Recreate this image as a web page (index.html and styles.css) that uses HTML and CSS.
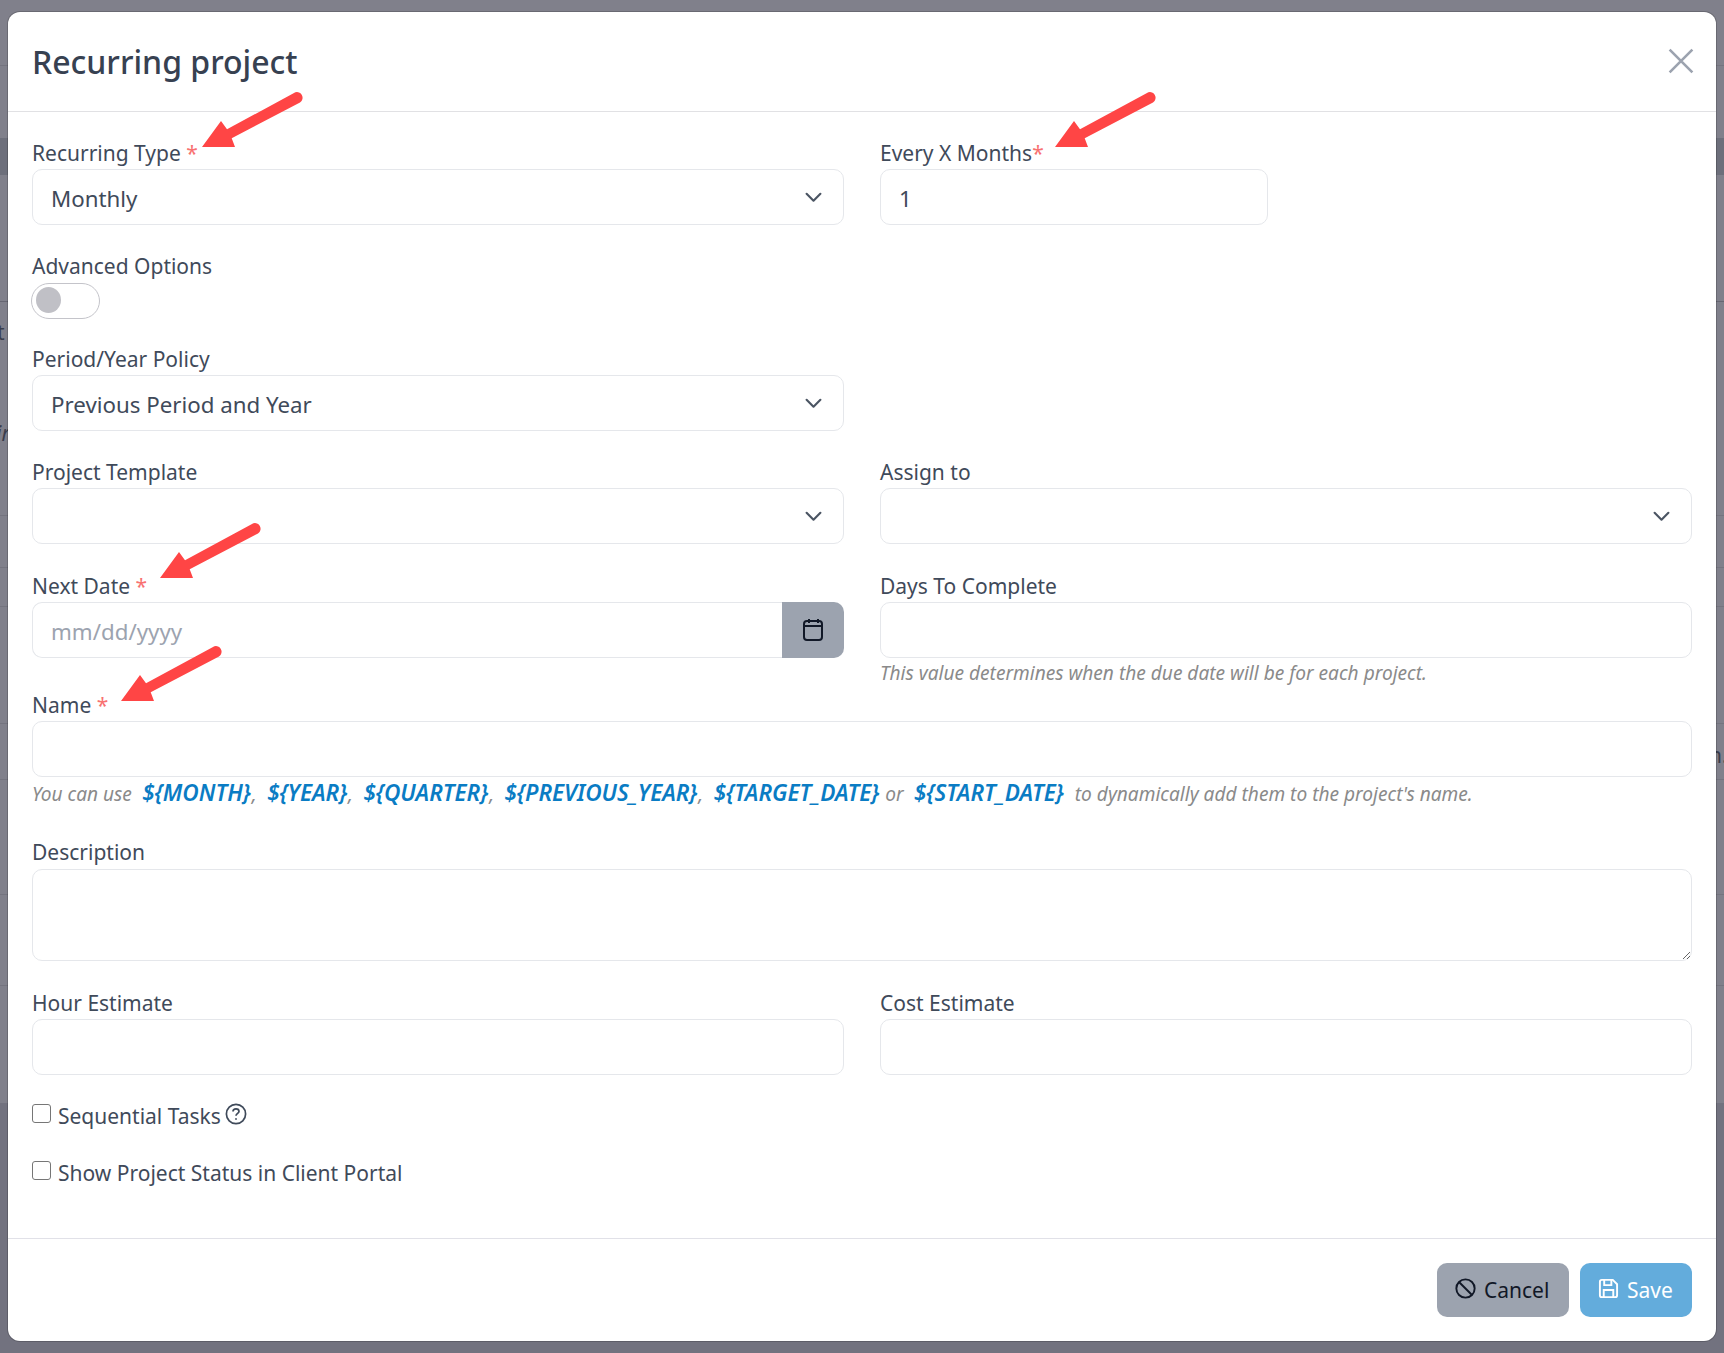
FILE: index.html
```html
<!DOCTYPE html>
<html lang="en">
<head>
  <meta charset="UTF-8">
  <title>Recurring project</title>
  <link rel="stylesheet" href="styles.css">
</head>
<body>
  <!-- Page dimmed behind the modal -->
  <div class="backdrop">
    <div class="bg-row bg-row-a"></div>
    <div class="bg-row bg-row-b"></div>
    <div class="bg-row bg-row-band"></div>
    <div class="bg-row bg-row-c"></div>
    <div class="bg-row bg-row-d"></div>
    <div class="bg-row bg-row-e"></div>
    <div class="bg-row bg-row-f"></div>
    <div class="bg-row bg-row-g"></div>
    <div class="bg-row bg-row-h"></div>
    <div class="bg-row bg-row-i"></div>
    <div class="bg-row bg-row-j"></div>
    <span class="bg-text bg-text-t">t</span>
    <span class="bg-text bg-text-ir">ir</span>
    <span class="bg-text bg-text-n">n.</span>
  </div>

  <svg class="defs" width="0" height="0">
    <symbol id="arrow" viewBox="0 0 104 58">
      <path d="M0 57 L19 31 L25 39.3 L92 3 A5.5 5.5 0 0 1 98 12.4 L29.7 48.3 L33 57 Z"/>
    </symbol>
    <symbol id="chevron" viewBox="0 0 16 16">
      <path d="M1.5 4.5 L8 11 L14.5 4.5" fill="none" stroke="currentColor" stroke-width="2" stroke-linecap="round" stroke-linejoin="round"/>
    </symbol>
  </svg>

  <div class="modal">
    <div class="modal-header">
      <h2 class="modal-title">Recurring project</h2>
      <svg class="close-icon" viewBox="0 0 24 24"><path d="M1.5 1.5 L22.5 22.5 M22.5 1.5 L1.5 22.5"/></svg>
    </div>

    <div class="modal-body">
      <div class="row">
        <div class="field">
          <label>Recurring Type <span class="req">*</span></label>
          <div class="select-wrap">
            <select class="control"><option>Monthly</option></select>
            <svg class="chevron"><use href="#chevron"/></svg>
          </div>
        </div>
        <div class="field">
          <label>Every X Months<span class="req">*</span></label>
          <input class="control control-short" type="text" value="1">
        </div>
      </div>

      <div class="row row-toggle">
        <div class="field">
          <label>Advanced Options</label>
          <div class="toggle"><span class="toggle-knob"></span></div>
        </div>
      </div>

      <div class="row">
        <div class="field">
          <label>Period/Year Policy</label>
          <div class="select-wrap">
            <select class="control"><option>Previous Period and Year</option></select>
            <svg class="chevron"><use href="#chevron"/></svg>
          </div>
        </div>
      </div>

      <div class="row row-template">
        <div class="field">
          <label>Project Template</label>
          <div class="select-wrap">
            <select class="control"><option></option></select>
            <svg class="chevron"><use href="#chevron"/></svg>
          </div>
        </div>
        <div class="field">
          <label>Assign to</label>
          <div class="select-wrap">
            <select class="control"><option></option></select>
            <svg class="chevron"><use href="#chevron"/></svg>
          </div>
        </div>
      </div>

      <div class="row row-tight">
        <div class="field">
          <label>Next Date <span class="req">*</span></label>
          <div class="date-group">
            <input class="control" type="text" placeholder="mm/dd/yyyy">
            <span class="date-btn">
              <svg viewBox="0 0 22 24" class="date-icon">
                <rect x="2" y="3" width="18" height="19" rx="3"/>
                <path d="M2 8 H20 M7 1 V5 M16 1 V5"/>
              </svg>
            </span>
          </div>
        </div>
        <div class="field">
          <label>Days To Complete</label>
          <input class="control" type="text">
          <div class="help">This value determines when the due date will be for each project.</div>
        </div>
      </div>

      <div class="row row-single row-tight">
        <div class="field">
          <label>Name <span class="req">*</span></label>
          <input class="control" type="text">
          <div class="help help-vars">You can use <b>${MONTH}</b>, <b>${YEAR}</b>, <b>${QUARTER}</b>, <b>${PREVIOUS_YEAR}</b>, <b>${TARGET_DATE}</b> or <b>${START_DATE}</b> to dynamically add them to the project's name.</div>
        </div>
      </div>

      <div class="row row-single row-desc">
        <div class="field">
          <label>Description</label>
          <textarea class="control control-area"></textarea>
        </div>
      </div>

      <div class="row">
        <div class="field">
          <label>Hour Estimate</label>
          <input class="control" type="text">
        </div>
        <div class="field">
          <label>Cost Estimate</label>
          <input class="control" type="text">
        </div>
      </div>

      <div class="check-row">
        <span class="check"></span>
        <span>Sequential Tasks</span>
        <svg class="help-icon" viewBox="0 0 22 22">
          <circle cx="11" cy="11" r="9.6"/>
          <path d="M8 8.6 C8 6.8 9.4 5.9 11 5.9 C12.7 5.9 14 6.9 14 8.4 C14 10.4 11 10.4 11 12.8"/>
          <circle class="help-dot" cx="11" cy="16" r=".9"/>
        </svg>
      </div>
      <div class="check-row">
        <span class="check"></span>
        <span>Show Project Status in Client Portal</span>
      </div>
    </div>

    <div class="modal-footer">
      <button class="btn btn-cancel">
        <svg viewBox="0 0 22 22" class="btn-icon"><circle cx="11" cy="11" r="9.6"/><path d="M4.2 4.2 L17.8 17.8"/></svg>
        Cancel
      </button>
      <button class="btn btn-save">
        <svg viewBox="0 0 22 22" class="btn-icon">
          <path d="M2 4 Q2 2 4 2 H15.5 L20 6.5 V18 Q20 20 18 20 H4 Q2 20 2 18 Z"/>
          <path d="M6.5 2 V7.5 H14 V2 M6 20 V12.5 H16 V20"/>
        </svg>
        Save
      </button>
    </div>

    <!-- Red annotation arrows drawn on top of the screenshot -->
    <svg class="arrow arrow-type"><use href="#arrow"/></svg>
    <svg class="arrow arrow-months"><use href="#arrow"/></svg>
    <svg class="arrow arrow-date"><use href="#arrow"/></svg>
    <svg class="arrow arrow-name"><use href="#arrow"/></svg>
  </div>
</body>
</html>
```

FILE: styles.css
```css
* {
  box-sizing: border-box;
}

html, body {
  margin: 0;
  height: 100%;
  overflow: hidden;
}

body {
  position: relative;
  width: 1724px;
  height: 1353px;
  padding: 12px 8px;
  font-family: "Noto Sans", "Open Sans", sans-serif;
  font-size: 21px;
  color: #3f4a5a;
  background-color: #72727f;
}

.defs {
  position: absolute;
}

/* Background page */
.backdrop {
  position: absolute;
  top: 0;
  left: 0;
  width: 100%;
  height: 1103px;
  background-color: #80808b;
  display: flex;
  flex-direction: column;
  overflow: hidden;
}

.bg-row {
  flex: none;
  border-bottom: 1px solid #74747f;
}

.bg-row-a { height: 66px; }
.bg-row-b { height: 72px; border-bottom: none; }
.bg-row-band { height: 37px; background-color: #6d6f7b; border-bottom: none; }
.bg-row-c { height: 127px; border-bottom-color: #666672; }
.bg-row-d { height: 214px; }
.bg-row-e { height: 52px; }
.bg-row-f { height: 39px; }
.bg-row-g { height: 117px; }
.bg-row-h { height: 56px; }
.bg-row-i { height: 115px; }
.bg-row-j { height: 91px; }

.bg-text {
  position: absolute;
  font-size: 21px;
  color: #3a3d4c;
}

.bg-text-t { top: 318px; left: -3px; }
.bg-text-ir { top: 419px; left: -4px; font-style: italic; }
.bg-text-n { top: 741px; left: 1709px; }

/* Modal */
.modal {
  position: relative;
  width: 1708px;
  height: 1329px;
  background-color: #fff;
  border-radius: 12px;
  box-shadow: 0 0 0 1px rgba(0, 0, 0, 0.18);
  display: flex;
  flex-direction: column;
}

.modal-header {
  height: 100px;
  padding: 0 24px;
  border-bottom: 1px solid #e1e1e4;
  display: flex;
  align-items: center;
  justify-content: space-between;
}

.modal-title {
  margin: 0;
  font-size: 32px;
  font-weight: 500;
  color: #374151;
}

.close-icon {
  width: 26px;
  height: 26px;
  margin: 0 -2px 0 0;
  position: relative;
  top: -1px;
  fill: none;
  stroke: #9ca3af;
  stroke-width: 2.4;
}

.modal-body {
  flex: 1;
  padding: 27px 24px 0;
}

.row {
  display: grid;
  grid-template-columns: 812px 812px;
  column-gap: 36px;
  margin-bottom: 27px;
}

.row-toggle {
  margin-bottom: 26px;
}

.row-template {
  margin-bottom: 28px;
}

.row-tight {
  margin-bottom: 7px;
}

.row-single {
  grid-template-columns: 1fr;
}

.row-desc {
  margin-top: 35px;
  margin-bottom: 28px;
}

.row-desc label {
  margin-bottom: 4px;
}

.field {
  min-width: 0;
}

label {
  display: block;
  height: 27px;
  margin-bottom: 3px;
  line-height: 29px;
  color: #3f4a5a;
}

.req {
  color: #f87171;
}

.control {
  display: block;
  width: 100%;
  height: 56px;
  padding: 3px 18px 0;
  border: 1px solid #e5e7eb;
  border-radius: 10px;
  background-color: #fff;
  font-family: inherit;
  font-size: 22.3px;
  color: #3f4a5a;
  appearance: none;
  outline: none;
}

.control::placeholder {
  color: #9ca3af;
  opacity: 1;
}

.control-short {
  width: 388px;
}

.control-area {
  height: 92px;
}

.select-wrap {
  position: relative;
}

.chevron {
  position: absolute;
  top: 20px;
  right: 22px;
  width: 17px;
  height: 17px;
  color: #4b5563;
}

.toggle {
  width: 69px;
  height: 36px;
  margin: 4px 0 0 -1px;
  padding: 3px 4px;
  border: 1.5px solid #c4c4ca;
  border-radius: 18px;
}

.toggle-knob {
  display: block;
  width: 25px;
  height: 26px;
  border-radius: 50%;
  background-color: #c0c0c6;
}

.date-group {
  display: flex;
}

.date-group .control {
  flex: 1;
  border-right: none;
  border-radius: 10px 0 0 10px;
}

.date-btn {
  width: 62px;
  height: 56px;
  border-radius: 0 10px 10px 0;
  background-color: #9ca3af;
  display: flex;
  align-items: center;
  justify-content: center;
}

.date-icon {
  width: 22px;
  height: 24px;
  fill: none;
  stroke: #111827;
  stroke-width: 2;
}

.help {
  height: 26px;
  line-height: 30px;
  font-size: 19.1px;
  font-style: italic;
  color: #8a8a8a;
  white-space: nowrap;
}

.help-vars {
  line-height: 32px;
}

.help-vars b {
  margin: 0 1px 0 5.5px;
  font-weight: 600;
  font-size: 22.6px;
  color: #0a7cc4;
}

.help-vars b:last-child {
  margin-right: 6px;
}

.check-row {
  display: flex;
  align-items: center;
  height: 27px;
  margin-bottom: 30px;
  gap: 7px;
}

.check {
  width: 19px;
  height: 19px;
  border: 1.5px solid #767676;
  border-radius: 3px;
  position: relative;
  top: -2px;
}

.help-icon {
  width: 22px;
  height: 22px;
  margin-left: -3px;
  position: relative;
  top: -2px;
  fill: none;
  stroke: #3f4a5a;
  stroke-width: 1.7;
}

.help-dot {
  fill: #3f4a5a;
  stroke: none;
}

.modal-footer {
  height: 103px;
  padding: 24px;
  border-top: 1px solid #e1e1e8;
  display: flex;
  justify-content: flex-end;
  gap: 11px;
}

.btn {
  height: 54px;
  padding: 0 18px;
  border: none;
  border-radius: 10px;
  font-family: inherit;
  font-size: 21px;
  display: flex;
  align-items: center;
  gap: 8px;
}

.btn-icon {
  width: 21px;
  height: 21px;
  fill: none;
  stroke: currentColor;
  stroke-width: 2;
  position: relative;
  top: -2px;
}

.btn-cancel {
  width: 132px;
  background-color: #9ca3af;
  color: #111827;
}

.btn-save {
  width: 112px;
  background-color: #63acdc;
  color: #fff;
}

/* Annotation arrows */
.arrow {
  position: absolute;
  width: 104px;
  height: 58px;
  fill: #ff4545;
}

.arrow-type { top: 78px; left: 194px; }
.arrow-months { top: 78px; left: 1046.5px; }
.arrow-date { top: 508.7px; left: 151.5px; }
.arrow-name { top: 632px; left: 113px; }
```
